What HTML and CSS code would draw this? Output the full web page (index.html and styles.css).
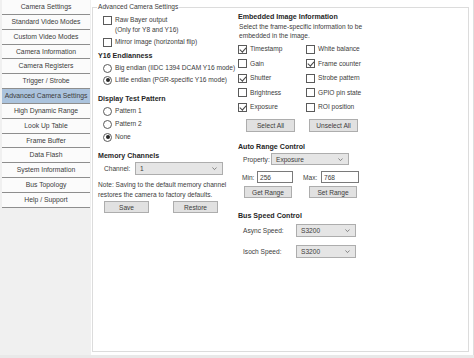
FILE: index.html
```html
<!DOCTYPE html>
<html lang="en">
<head>
  <meta charset="UTF-8" />
  <title>Advanced Camera Settings</title>
  <link rel="stylesheet" href="styles.css">
</head>
<body>
  <div class="window">
    <nav class="sidebar">
      <div class="tab">Camera Settings</div>
      <div class="tab">Standard Video Modes</div>
      <div class="tab">Custom Video Modes</div>
      <div class="tab">Camera Information</div>
      <div class="tab">Camera Registers</div>
      <div class="tab">Trigger / Strobe</div>
      <div class="tab active">Advanced Camera Settings</div>
      <div class="tab">High Dynamic Range</div>
      <div class="tab">Look Up Table</div>
      <div class="tab">Frame Buffer</div>
      <div class="tab">Data Flash</div>
      <div class="tab">System Information</div>
      <div class="tab">Bus Topology</div>
      <div class="tab">Help / Support</div>
    </nav>

    <main class="content">
      <fieldset class="group">
        <legend>Advanced Camera Settings</legend>
        <div class="columns">

          <!-- left column -->
          <section class="col left">
            <div class="opt first">
              <span class="check"></span>
              <span>Raw Bayer output<br>(Only for Y8 and Y16)</span>
            </div>
            <div class="opt"><span class="check"></span><span>Mirror image (horizontal flip)</span></div>

            <h3 class="heading">Y16 Endianness</h3>
            <div class="opt"><span class="radio"></span><span>Big endian (IIDC 1394 DCAM Y16 mode)</span></div>
            <div class="opt"><span class="radio on"></span><span>Little endian (PGR-specific Y16 mode)</span></div>

            <h3 class="heading spaced">Display Test Pattern</h3>
            <div class="opt"><span class="radio"></span><span>Pattern 1</span></div>
            <div class="opt loose"><span class="radio"></span><span>Pattern 2</span></div>
            <div class="opt loose"><span class="radio on"></span><span>None</span></div>

            <h3 class="heading spaced">Memory Channels</h3>
            <div class="field channel">
              <span class="label">Channel:</span>
              <div class="select">1<svg class="chev" viewBox="0 0 6 4"><path d="M0.5 0.5 L3 3 L5.5 0.5"/></svg></div>
            </div>
            <p class="note">Note: Saving to the default memory channel<br>restores the camera to factory defaults.</p>
            <div class="btn-row mem">
              <button class="btn save">Save</button>
              <button class="btn restore">Restore</button>
            </div>
          </section>

          <!-- right column -->
          <section class="col right">
            <h3 class="heading top">Embedded Image Information</h3>
            <p class="desc">Select the frame-specific information to be<br>embedded in the image.</p>
            <div class="check-grid">
              <div class="opt"><span class="check on"></span><span>Timestamp</span></div>
              <div class="opt"><span class="check"></span><span>White balance</span></div>
              <div class="opt"><span class="check"></span><span>Gain</span></div>
              <div class="opt"><span class="check on"></span><span>Frame counter</span></div>
              <div class="opt"><span class="check on"></span><span>Shutter</span></div>
              <div class="opt"><span class="check"></span><span>Strobe pattern</span></div>
              <div class="opt"><span class="check"></span><span>Brightness</span></div>
              <div class="opt"><span class="check"></span><span>GPIO pin state</span></div>
              <div class="opt"><span class="check on"></span><span>Exposure</span></div>
              <div class="opt"><span class="check"></span><span>ROI position</span></div>
            </div>
            <div class="btn-row embed">
              <button class="btn">Select All</button>
              <button class="btn">Unselect All</button>
            </div>

            <h3 class="heading auto">Auto Range Control</h3>
            <div class="field property">
              <span class="label">Property:</span>
              <div class="select">Exposure<svg class="chev" viewBox="0 0 6 4"><path d="M0.5 0.5 L3 3 L5.5 0.5"/></svg></div>
            </div>
            <div class="field range">
              <span class="label">Min:</span>
              <div class="input">256</div>
              <span class="label max">Max:</span>
              <div class="input">768</div>
            </div>
            <div class="btn-row ranges">
              <button class="btn">Get Range</button>
              <button class="btn">Set Range</button>
            </div>

            <h3 class="heading bus">Bus Speed Control</h3>
            <div class="field speed">
              <span class="label">Async Speed:</span>
              <div class="select">S3200<svg class="chev" viewBox="0 0 6 4"><path d="M0.5 0.5 L3 3 L5.5 0.5"/></svg></div>
            </div>
            <div class="field speed isoch">
              <span class="label">Isoch Speed:</span>
              <div class="select">S3200<svg class="chev" viewBox="0 0 6 4"><path d="M0.5 0.5 L3 3 L5.5 0.5"/></svg></div>
            </div>
          </section>

        </div>
      </fieldset>
    </main>
  </div>
  <div class="bottom-strip"></div>
</body>
</html>
```

FILE: styles.css
```css
* {
  box-sizing: border-box;
}

html, body {
  margin: 0;
  padding: 0;
}

body {
  width: 474px;
  height: 358px;
  overflow: hidden;
  background: #fff;
  color: #3c3c3c;
  font-family: "Liberation Sans", Arial, sans-serif;
  font-size: 6.6px;
}

.window {
  display: flex;
  height: 355px;
}

/* ---- sidebar tabs ---- */
.sidebar {
  width: 92px;
  background: #f0f0f0;
  border-right: 1px solid #fff;
  padding: 0 1px 0 2px;
}

.tab {
  height: 14.85px;
  line-height: 14px;
  text-align: center;
  white-space: nowrap;
  font-size: 6.8px;
  background: #fbfbfb;
  border-bottom: 1px solid #8e8e8e;
}

.tab.active {
  background: #abc3dd;
}

/* ---- main area ---- */
.content {
  flex: 1;
  padding: 3px 4px 3px 0;
  border-right: 1px solid #dedede;
}

.group {
  margin: 0;
  padding: 0;
  min-width: 0;
  height: 100%;
  border: 1px solid #dcdcdc;
}

.group legend {
  margin-left: 4px;
  padding: 0 1px;
  line-height: 8px;
}

.columns {
  display: flex;
}

.col.left {
  width: 145px;
  padding-left: 5px;
}

.col.right {
  flex: 1;
}

.heading {
  margin: 4px 0 0;
  font-size: 7.1px;
  font-weight: bold;
  line-height: 10px;
  color: #262626;
}

.heading.spaced { margin-top: 9px; }
.heading.top { margin-top: 1px; }
.heading.auto { margin-top: 10px; }
.heading.bus { margin-top: 13px; }

/* ---- checkboxes and radios ---- */
.opt {
  display: flex;
  align-items: flex-start;
  gap: 3px;
  margin: 2px 0 0 5px;
  line-height: 10px;
  white-space: nowrap;
}

.opt.first { margin-top: 4px; }
.opt.loose { margin-top: 3px; }

.check, .radio {
  flex: none;
  width: 9px;
  height: 9px;
  margin-top: 0.5px;
  background: #fff;
  border: 1px solid #5a5a5a;
  position: relative;
}

.radio {
  border-radius: 50%;
}

.radio.on::after {
  content: "";
  position: absolute;
  left: 1.5px;
  top: 1.5px;
  width: 4px;
  height: 4px;
  border-radius: 50%;
  background: #2a2a2a;
}

.check.on::after {
  content: "";
  position: absolute;
  left: 2.3px;
  top: 0.4px;
  width: 2.6px;
  height: 5px;
  border: solid #444;
  border-width: 0 1px 1px 0;
  transform: rotate(42deg);
}

.check-grid {
  display: grid;
  grid-template-columns: 68px 1fr;
  grid-auto-rows: 14.5px;
  margin-top: 2px;
}

.check-grid .opt {
  margin: 2px 0 0;
}

/* ---- text ---- */
.desc {
  margin: 0;
  padding-left: 1px;
  line-height: 9px;
}

.note {
  margin: 5px 0 0;
  line-height: 9.5px;
  white-space: nowrap;
}

/* ---- form controls ---- */
.field {
  display: flex;
  align-items: center;
}

.label {
  white-space: nowrap;
}

.select {
  position: relative;
  background: #e5e5e5;
  border: 1px solid #adadad;
  padding-left: 4px;
  display: flex;
  align-items: center;
}

.chev {
  position: absolute;
  right: 5px;
  top: 50%;
  width: 5px;
  height: 3.5px;
  margin-top: -1.5px;
}

.chev path {
  fill: none;
  stroke: #555;
  stroke-width: 0.8;
}

.input {
  background: #fff;
  border: 1px solid #7a7a7a;
  padding-left: 2px;
  display: flex;
  align-items: center;
}

.btn {
  font: inherit;
  color: #3c3c3c;
  background: #e1e1e1;
  border: 1px solid #adadad;
  padding: 0;
  cursor: pointer;
}

.btn-row {
  display: flex;
}

/* left column controls */
.channel {
  margin: 1px 0 0 6px;
  height: 13px;
}

.channel .label { width: 31px; }
.channel .select { width: 88px; height: 13px; }

.mem {
  margin: 2px 0 0 6px;
  gap: 24px;
}

.mem .btn {
  height: 12px;
  width: 45px;
}

/* right column controls */
.embed {
  margin: 4.5px 0 0 8px;
  gap: 14px;
}

.embed .btn {
  width: 49px;
  height: 13px;
}

.property {
  margin: 1px 0 0 5px;
  height: 12px;
}

.property .label { width: 28px; }
.property .select { width: 78px; height: 12px; }

.range {
  margin: 6px 0 0 4px;
  height: 12px;
}

.range .label { width: 15px; }
.range .label.max { width: 18px; margin-left: 10px; }
.range .input { width: 36px; height: 12px; }
.range .input + .label + .input { width: 38px; }

.ranges {
  margin: 3px 0 0 6px;
  gap: 17px;
}

.ranges .btn {
  width: 48px;
  height: 12px;
}

.speed {
  margin: 3px 0 0 5px;
  height: 13px;
}

.speed.isoch { margin-top: 8px; }
.speed .label { width: 53px; }
.speed .select { width: 60px; height: 13px; }

.bottom-strip {
  height: 3px;
  background: #e9e9e9;
}
```
